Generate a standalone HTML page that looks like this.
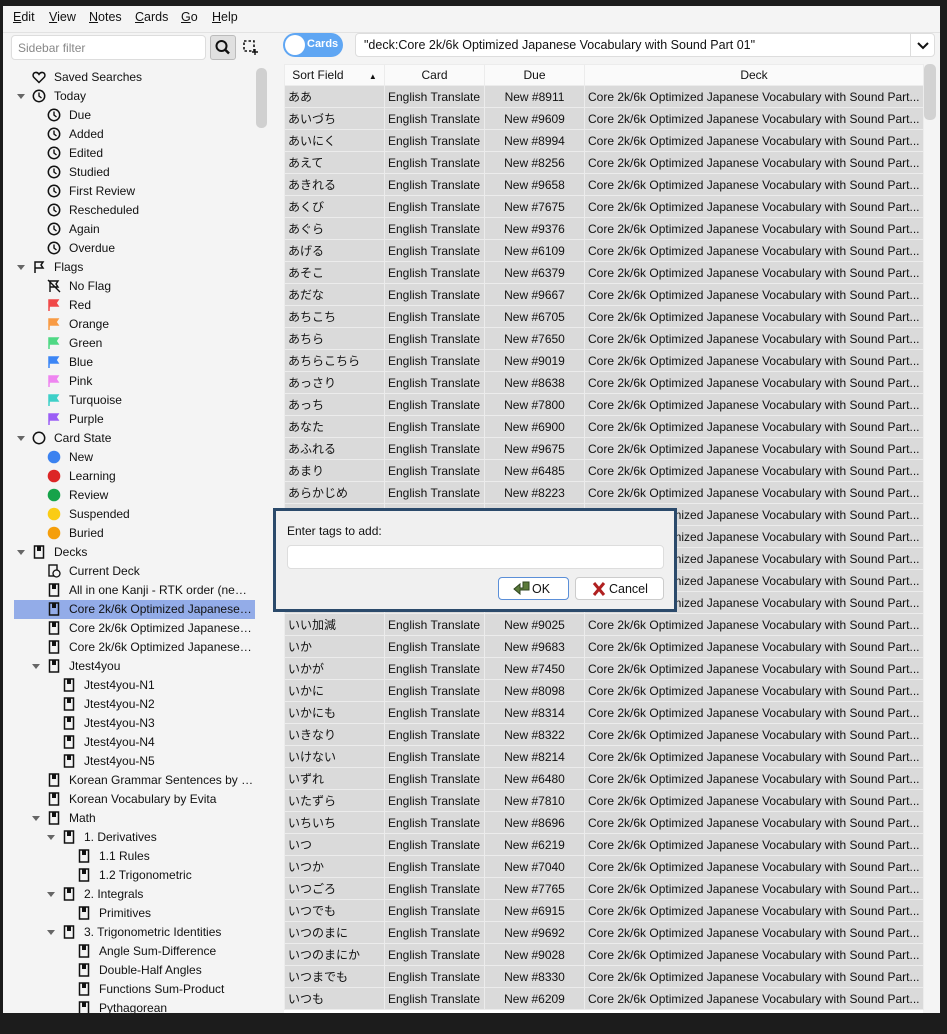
<!DOCTYPE html>
<html><head><meta charset="utf-8"><style>
*{box-sizing:border-box;margin:0;padding:0}
body{width:947px;height:1034px;background:#1c1c1c;position:relative;overflow:hidden;font-family:"Liberation Sans","Noto Sans CJK JP",sans-serif;font-size:12px;color:#111}
#win{position:absolute;left:3px;top:6px;width:937px;height:1007px;background:#f4f4f4;overflow:hidden}
.abs{position:absolute}
.menu span{position:absolute;top:4px;font-size:12.5px}
.menu u{text-decoration:underline}
.sb{position:absolute;left:0;top:62px;width:266px;height:945px;overflow:hidden}
.it{position:absolute;height:19px;line-height:19px;white-space:nowrap;font-size:12px}
.it svg{position:absolute;top:2px}
.arr{position:absolute;width:0;height:0;border-left:4px solid transparent;border-right:4px solid transparent;border-top:5px solid #666;top:7px}
table{border-collapse:collapse;position:absolute;left:281px;top:58px;table-layout:fixed}
td,th{height:22px;border:1px solid #ececec;white-space:nowrap;overflow:hidden;font-weight:normal;font-size:12px;padding:0 3px}
th{background:#fafafa;height:21px}
td{background:#dadada}
td.c,th{text-align:center}
</style></head><body>
<div id="win">
<div class="menu"><span style="left:10px"><u>E</u>dit</span><span style="left:46px"><u>V</u>iew</span><span style="left:86px"><u>N</u>otes</span><span style="left:132px"><u>C</u>ards</span><span style="left:178px"><u>G</u>o</span><span style="left:209px"><u>H</u>elp</span></div>
<div class="abs" style="left:0;top:26px;width:937px;height:1px;background:#e2e2e2"></div>
<div class="abs" style="left:8px;top:29px;width:195px;height:25px;background:#fff;border:1px solid #ddd;border-radius:4px;color:#888;padding:5px 0 0 6px;font-size:12px">Sidebar filter</div>
<div class="abs" style="left:207px;top:29px;width:26px;height:25px;background:#e0e0e0;border:1px solid #bbb;border-radius:3px"><svg width="24" height="23"><circle cx="10.5" cy="10" r="5" fill="none" stroke="#111" stroke-width="2"/><line x1="14" y1="13.5" x2="18" y2="17.5" stroke="#111" stroke-width="2.5"/></svg></div>
<svg class="abs" style="left:240px;top:34px" width="16" height="16"><rect x="1" y="1" width="10" height="10" fill="none" stroke="#111" stroke-width="1.6" stroke-dasharray="2.5 2"/><path d="M12 9v6M9 12h6" stroke="#111" stroke-width="1.4"/></svg>
<div class="abs" style="left:280px;top:27px;width:60px;height:24px;background:#5fa6f3;border-radius:12px"><div class="abs" style="left:2px;top:2px;width:20px;height:20px;background:#fff;border-radius:10px"></div><span class="abs" style="left:24px;top:5px;color:#fff;font-weight:bold;font-size:11px">Cards</span></div>
<div class="abs" style="left:352px;top:27px;width:580px;height:24px;background:#fff;border:1px solid #ddd;border-radius:4px;padding:4px 0 0 8px;font-size:12.5px">"deck:Core 2k/6k Optimized Japanese Vocabulary with Sound Part 01"
<div class="abs" style="right:0;top:0;width:24px;height:22px;border-left:1px solid #ddd"><svg width="24" height="22"><path d="M7 9l5 5 5-5" fill="none" stroke="#111" stroke-width="2"/></svg></div></div>

<div class="abs" style="left:281px;top:58px;width:639px;height:950px;background:#fff"></div>
<div class="abs" style="left:921px;top:58px;width:12px;height:56px;background:#d2d2d2;border-radius:5px"></div>

<div class="sb">
<div class="abs" style="left:253px;top:0;width:11px;height:60px;background:#d0d0d0;border-radius:5px"></div>
<div class="abs" style="left:11px;top:532px;width:241px;height:19px;background:#93ace8"></div>
<div class="it" style="top:0;left:29px"><svg width="14" height="14" style="left:0"><path d="M7 12.5L2 7.5C0.5 6 0.8 3 3.3 2.5 5 2.2 6.2 3 7 4.3 7.8 3 9 2.2 10.7 2.5 13.2 3 13.5 6 12 7.5Z" fill="none" stroke="#111" stroke-width="1.5"/></svg><span style="position:absolute;left:22px">Saved Searches</span></div>
<div class="it" style="top:19px;left:14px"><i class="arr" style="left:0"></i><svg width="14" height="14" style="left:15px"><circle cx="7" cy="7" r="5.7" fill="none" stroke="#111" stroke-width="1.5"/><path d="M7 3.5V7l2.5 2" fill="none" stroke="#111" stroke-width="1.4"/></svg><span style="position:absolute;left:37px">Today</span></div>
<div class="it" style="top:38px;left:44px"><svg width="14" height="14"><circle cx="7" cy="7" r="5.7" fill="none" stroke="#111" stroke-width="1.5"/><path d="M7 3.5V7l2.5 2" fill="none" stroke="#111" stroke-width="1.4"/></svg><span style="position:absolute;left:22px">Due</span></div>
<div class="it" style="top:57px;left:44px"><svg width="14" height="14"><circle cx="7" cy="7" r="5.7" fill="none" stroke="#111" stroke-width="1.5"/><path d="M7 3.5V7l2.5 2" fill="none" stroke="#111" stroke-width="1.4"/></svg><span style="position:absolute;left:22px">Added</span></div>
<div class="it" style="top:76px;left:44px"><svg width="14" height="14"><circle cx="7" cy="7" r="5.7" fill="none" stroke="#111" stroke-width="1.5"/><path d="M7 3.5V7l2.5 2" fill="none" stroke="#111" stroke-width="1.4"/></svg><span style="position:absolute;left:22px">Edited</span></div>
<div class="it" style="top:95px;left:44px"><svg width="14" height="14"><circle cx="7" cy="7" r="5.7" fill="none" stroke="#111" stroke-width="1.5"/><path d="M7 3.5V7l2.5 2" fill="none" stroke="#111" stroke-width="1.4"/></svg><span style="position:absolute;left:22px">Studied</span></div>
<div class="it" style="top:114px;left:44px"><svg width="14" height="14"><circle cx="7" cy="7" r="5.7" fill="none" stroke="#111" stroke-width="1.5"/><path d="M7 3.5V7l2.5 2" fill="none" stroke="#111" stroke-width="1.4"/></svg><span style="position:absolute;left:22px">First Review</span></div>
<div class="it" style="top:133px;left:44px"><svg width="14" height="14"><circle cx="7" cy="7" r="5.7" fill="none" stroke="#111" stroke-width="1.5"/><path d="M7 3.5V7l2.5 2" fill="none" stroke="#111" stroke-width="1.4"/></svg><span style="position:absolute;left:22px">Rescheduled</span></div>
<div class="it" style="top:152px;left:44px"><svg width="14" height="14"><circle cx="7" cy="7" r="5.7" fill="none" stroke="#111" stroke-width="1.5"/><path d="M7 3.5V7l2.5 2" fill="none" stroke="#111" stroke-width="1.4"/></svg><span style="position:absolute;left:22px">Again</span></div>
<div class="it" style="top:171px;left:44px"><svg width="14" height="14"><circle cx="7" cy="7" r="5.7" fill="none" stroke="#111" stroke-width="1.5"/><path d="M7 3.5V7l2.5 2" fill="none" stroke="#111" stroke-width="1.4"/></svg><span style="position:absolute;left:22px">Overdue</span></div>
<div class="it" style="top:190px;left:14px"><i class="arr" style="left:0"></i><svg width="14" height="14" style="left:15px"><path d="M3 13V2h8l-2 3 2 3H3" fill="none" stroke="#111" stroke-width="1.5"/></svg><span style="position:absolute;left:37px">Flags</span></div>
<div class="it" style="top:209px;left:44px"><svg width="14" height="14"><path d="M3 13V2h8l-2 3 2 3H3M1 1l12 12" fill="none" stroke="#111" stroke-width="1.4"/></svg><span style="position:absolute;left:22px">No Flag</span></div>
<div class="it" style="top:228px;left:44px"><svg width="14" height="14"><path d="M2 13V2h9l-2 3 2 3H3" fill="#f04848" stroke="#f04848" stroke-width="1.5"/></svg><span style="position:absolute;left:22px">Red</span></div>
<div class="it" style="top:247px;left:44px"><svg width="14" height="14"><path d="M2 13V2h9l-2 3 2 3H3" fill="#f89b45" stroke="#f89b45" stroke-width="1.5"/></svg><span style="position:absolute;left:22px">Orange</span></div>
<div class="it" style="top:266px;left:44px"><svg width="14" height="14"><path d="M2 13V2h9l-2 3 2 3H3" fill="#4fd884" stroke="#4fd884" stroke-width="1.5"/></svg><span style="position:absolute;left:22px">Green</span></div>
<div class="it" style="top:285px;left:44px"><svg width="14" height="14"><path d="M2 13V2h9l-2 3 2 3H3" fill="#3d86f5" stroke="#3d86f5" stroke-width="1.5"/></svg><span style="position:absolute;left:22px">Blue</span></div>
<div class="it" style="top:304px;left:44px"><svg width="14" height="14"><path d="M2 13V2h9l-2 3 2 3H3" fill="#ee85f0" stroke="#ee85f0" stroke-width="1.5"/></svg><span style="position:absolute;left:22px">Pink</span></div>
<div class="it" style="top:323px;left:44px"><svg width="14" height="14"><path d="M2 13V2h9l-2 3 2 3H3" fill="#3ed0c8" stroke="#3ed0c8" stroke-width="1.5"/></svg><span style="position:absolute;left:22px">Turquoise</span></div>
<div class="it" style="top:342px;left:44px"><svg width="14" height="14"><path d="M2 13V2h9l-2 3 2 3H3" fill="#9b5ef5" stroke="#9b5ef5" stroke-width="1.5"/></svg><span style="position:absolute;left:22px">Purple</span></div>
<div class="it" style="top:361px;left:14px"><i class="arr" style="left:0"></i><svg width="14" height="14" style="left:15px"><circle cx="7" cy="7" r="5.7" fill="none" stroke="#111" stroke-width="1.5"/></svg><span style="position:absolute;left:37px">Card State</span></div>
<div class="it" style="top:380px;left:44px"><svg width="14" height="14"><circle cx="7" cy="7" r="6.3" fill="#3b82f0"/></svg><span style="position:absolute;left:22px">New</span></div>
<div class="it" style="top:399px;left:44px"><svg width="14" height="14"><circle cx="7" cy="7" r="6.3" fill="#dc2626"/></svg><span style="position:absolute;left:22px">Learning</span></div>
<div class="it" style="top:418px;left:44px"><svg width="14" height="14"><circle cx="7" cy="7" r="6.3" fill="#16a34a"/></svg><span style="position:absolute;left:22px">Review</span></div>
<div class="it" style="top:437px;left:44px"><svg width="14" height="14"><circle cx="7" cy="7" r="6.3" fill="#facc15"/></svg><span style="position:absolute;left:22px">Suspended</span></div>
<div class="it" style="top:456px;left:44px"><svg width="14" height="14"><circle cx="7" cy="7" r="6.3" fill="#f59e0b"/></svg><span style="position:absolute;left:22px">Buried</span></div>
<div class="it" style="top:475px;left:14px"><i class="arr" style="left:0"></i><svg width="14" height="14" style="left:15px"><rect x="2.5" y="1" width="9" height="12" fill="none" stroke="#111" stroke-width="1.5"/><rect x="5" y="1" width="4" height="5" fill="#111"/></svg><span style="position:absolute;left:37px">Decks</span></div>
<div class="it" style="top:494px;left:44px"><svg width="14" height="14"><rect x="2" y="1" width="8" height="11" fill="none" stroke="#111" stroke-width="1.4"/><circle cx="9.5" cy="9.5" r="3.5" fill="#f4f4f4" stroke="#111" stroke-width="1.3"/></svg><span style="position:absolute;left:22px">Current Deck</span></div>
<div class="it" style="top:513px;left:44px"><svg width="14" height="14"><rect x="2.5" y="1" width="9" height="12" fill="none" stroke="#111" stroke-width="1.5"/><rect x="5" y="1" width="4" height="5" fill="#111"/></svg><span style="position:absolute;left:22px">All in one Kanji - RTK order (ne…</span></div>
<div class="it" style="top:532px;left:44px"><svg width="14" height="14"><rect x="2.5" y="1" width="9" height="12" fill="none" stroke="#111" stroke-width="1.5"/><rect x="5" y="1" width="4" height="5" fill="#111"/></svg><span style="position:absolute;left:22px">Core 2k/6k Optimized Japanese…</span></div>
<div class="it" style="top:551px;left:44px"><svg width="14" height="14"><rect x="2.5" y="1" width="9" height="12" fill="none" stroke="#111" stroke-width="1.5"/><rect x="5" y="1" width="4" height="5" fill="#111"/></svg><span style="position:absolute;left:22px">Core 2k/6k Optimized Japanese…</span></div>
<div class="it" style="top:570px;left:44px"><svg width="14" height="14"><rect x="2.5" y="1" width="9" height="12" fill="none" stroke="#111" stroke-width="1.5"/><rect x="5" y="1" width="4" height="5" fill="#111"/></svg><span style="position:absolute;left:22px">Core 2k/6k Optimized Japanese…</span></div>
<div class="it" style="top:589px;left:29px"><i class="arr" style="left:0"></i><svg width="14" height="14" style="left:15px"><rect x="2.5" y="1" width="9" height="12" fill="none" stroke="#111" stroke-width="1.5"/><rect x="5" y="1" width="4" height="5" fill="#111"/></svg><span style="position:absolute;left:37px">Jtest4you</span></div>
<div class="it" style="top:608px;left:59px"><svg width="14" height="14"><rect x="2.5" y="1" width="9" height="12" fill="none" stroke="#111" stroke-width="1.5"/><rect x="5" y="1" width="4" height="5" fill="#111"/></svg><span style="position:absolute;left:22px">Jtest4you-N1</span></div>
<div class="it" style="top:627px;left:59px"><svg width="14" height="14"><rect x="2.5" y="1" width="9" height="12" fill="none" stroke="#111" stroke-width="1.5"/><rect x="5" y="1" width="4" height="5" fill="#111"/></svg><span style="position:absolute;left:22px">Jtest4you-N2</span></div>
<div class="it" style="top:646px;left:59px"><svg width="14" height="14"><rect x="2.5" y="1" width="9" height="12" fill="none" stroke="#111" stroke-width="1.5"/><rect x="5" y="1" width="4" height="5" fill="#111"/></svg><span style="position:absolute;left:22px">Jtest4you-N3</span></div>
<div class="it" style="top:665px;left:59px"><svg width="14" height="14"><rect x="2.5" y="1" width="9" height="12" fill="none" stroke="#111" stroke-width="1.5"/><rect x="5" y="1" width="4" height="5" fill="#111"/></svg><span style="position:absolute;left:22px">Jtest4you-N4</span></div>
<div class="it" style="top:684px;left:59px"><svg width="14" height="14"><rect x="2.5" y="1" width="9" height="12" fill="none" stroke="#111" stroke-width="1.5"/><rect x="5" y="1" width="4" height="5" fill="#111"/></svg><span style="position:absolute;left:22px">Jtest4you-N5</span></div>
<div class="it" style="top:703px;left:44px"><svg width="14" height="14"><rect x="2.5" y="1" width="9" height="12" fill="none" stroke="#111" stroke-width="1.5"/><rect x="5" y="1" width="4" height="5" fill="#111"/></svg><span style="position:absolute;left:22px">Korean Grammar Sentences by …</span></div>
<div class="it" style="top:722px;left:44px"><svg width="14" height="14"><rect x="2.5" y="1" width="9" height="12" fill="none" stroke="#111" stroke-width="1.5"/><rect x="5" y="1" width="4" height="5" fill="#111"/></svg><span style="position:absolute;left:22px">Korean Vocabulary by Evita</span></div>
<div class="it" style="top:741px;left:29px"><i class="arr" style="left:0"></i><svg width="14" height="14" style="left:15px"><rect x="2.5" y="1" width="9" height="12" fill="none" stroke="#111" stroke-width="1.5"/><rect x="5" y="1" width="4" height="5" fill="#111"/></svg><span style="position:absolute;left:37px">Math</span></div>
<div class="it" style="top:760px;left:44px"><i class="arr" style="left:0"></i><svg width="14" height="14" style="left:15px"><rect x="2.5" y="1" width="9" height="12" fill="none" stroke="#111" stroke-width="1.5"/><rect x="5" y="1" width="4" height="5" fill="#111"/></svg><span style="position:absolute;left:37px">1. Derivatives</span></div>
<div class="it" style="top:779px;left:74px"><svg width="14" height="14"><rect x="2.5" y="1" width="9" height="12" fill="none" stroke="#111" stroke-width="1.5"/><rect x="5" y="1" width="4" height="5" fill="#111"/></svg><span style="position:absolute;left:22px">1.1 Rules</span></div>
<div class="it" style="top:798px;left:74px"><svg width="14" height="14"><rect x="2.5" y="1" width="9" height="12" fill="none" stroke="#111" stroke-width="1.5"/><rect x="5" y="1" width="4" height="5" fill="#111"/></svg><span style="position:absolute;left:22px">1.2 Trigonometric</span></div>
<div class="it" style="top:817px;left:44px"><i class="arr" style="left:0"></i><svg width="14" height="14" style="left:15px"><rect x="2.5" y="1" width="9" height="12" fill="none" stroke="#111" stroke-width="1.5"/><rect x="5" y="1" width="4" height="5" fill="#111"/></svg><span style="position:absolute;left:37px">2. Integrals</span></div>
<div class="it" style="top:836px;left:74px"><svg width="14" height="14"><rect x="2.5" y="1" width="9" height="12" fill="none" stroke="#111" stroke-width="1.5"/><rect x="5" y="1" width="4" height="5" fill="#111"/></svg><span style="position:absolute;left:22px">Primitives</span></div>
<div class="it" style="top:855px;left:44px"><i class="arr" style="left:0"></i><svg width="14" height="14" style="left:15px"><rect x="2.5" y="1" width="9" height="12" fill="none" stroke="#111" stroke-width="1.5"/><rect x="5" y="1" width="4" height="5" fill="#111"/></svg><span style="position:absolute;left:37px">3. Trigonometric Identities</span></div>
<div class="it" style="top:874px;left:74px"><svg width="14" height="14"><rect x="2.5" y="1" width="9" height="12" fill="none" stroke="#111" stroke-width="1.5"/><rect x="5" y="1" width="4" height="5" fill="#111"/></svg><span style="position:absolute;left:22px">Angle Sum-Difference</span></div>
<div class="it" style="top:893px;left:74px"><svg width="14" height="14"><rect x="2.5" y="1" width="9" height="12" fill="none" stroke="#111" stroke-width="1.5"/><rect x="5" y="1" width="4" height="5" fill="#111"/></svg><span style="position:absolute;left:22px">Double-Half Angles</span></div>
<div class="it" style="top:912px;left:74px"><svg width="14" height="14"><rect x="2.5" y="1" width="9" height="12" fill="none" stroke="#111" stroke-width="1.5"/><rect x="5" y="1" width="4" height="5" fill="#111"/></svg><span style="position:absolute;left:22px">Functions Sum-Product</span></div>
<div class="it" style="top:931px;left:74px"><svg width="14" height="14"><rect x="2.5" y="1" width="9" height="12" fill="none" stroke="#111" stroke-width="1.5"/><rect x="5" y="1" width="4" height="5" fill="#111"/></svg><span style="position:absolute;left:22px">Pythagorean</span></div>
<div class="it" style="top:950px;left:44px"><svg width="14" height="14"><rect x="2.5" y="1" width="9" height="12" fill="none" stroke="#111" stroke-width="1.5"/><rect x="5" y="1" width="4" height="5" fill="#111"/></svg></div>
</div>

<table>
<colgroup><col style="width:100px"><col style="width:100px"><col style="width:100px"><col style="width:339px"></colgroup>
<tr><th>Sort Field <span style="font-size:8px;margin-left:22px">▲</span></th><th>Card</th><th>Due</th><th>Deck</th></tr>
<tr><td>ああ</td><td>English Translate</td><td class="c">New #8911</td><td>Core 2k/6k Optimized Japanese Vocabulary with Sound Part...</td></tr>
<tr><td>あいづち</td><td>English Translate</td><td class="c">New #9609</td><td>Core 2k/6k Optimized Japanese Vocabulary with Sound Part...</td></tr>
<tr><td>あいにく</td><td>English Translate</td><td class="c">New #8994</td><td>Core 2k/6k Optimized Japanese Vocabulary with Sound Part...</td></tr>
<tr><td>あえて</td><td>English Translate</td><td class="c">New #8256</td><td>Core 2k/6k Optimized Japanese Vocabulary with Sound Part...</td></tr>
<tr><td>あきれる</td><td>English Translate</td><td class="c">New #9658</td><td>Core 2k/6k Optimized Japanese Vocabulary with Sound Part...</td></tr>
<tr><td>あくび</td><td>English Translate</td><td class="c">New #7675</td><td>Core 2k/6k Optimized Japanese Vocabulary with Sound Part...</td></tr>
<tr><td>あぐら</td><td>English Translate</td><td class="c">New #9376</td><td>Core 2k/6k Optimized Japanese Vocabulary with Sound Part...</td></tr>
<tr><td>あげる</td><td>English Translate</td><td class="c">New #6109</td><td>Core 2k/6k Optimized Japanese Vocabulary with Sound Part...</td></tr>
<tr><td>あそこ</td><td>English Translate</td><td class="c">New #6379</td><td>Core 2k/6k Optimized Japanese Vocabulary with Sound Part...</td></tr>
<tr><td>あだな</td><td>English Translate</td><td class="c">New #9667</td><td>Core 2k/6k Optimized Japanese Vocabulary with Sound Part...</td></tr>
<tr><td>あちこち</td><td>English Translate</td><td class="c">New #6705</td><td>Core 2k/6k Optimized Japanese Vocabulary with Sound Part...</td></tr>
<tr><td>あちら</td><td>English Translate</td><td class="c">New #7650</td><td>Core 2k/6k Optimized Japanese Vocabulary with Sound Part...</td></tr>
<tr><td>あちらこちら</td><td>English Translate</td><td class="c">New #9019</td><td>Core 2k/6k Optimized Japanese Vocabulary with Sound Part...</td></tr>
<tr><td>あっさり</td><td>English Translate</td><td class="c">New #8638</td><td>Core 2k/6k Optimized Japanese Vocabulary with Sound Part...</td></tr>
<tr><td>あっち</td><td>English Translate</td><td class="c">New #7800</td><td>Core 2k/6k Optimized Japanese Vocabulary with Sound Part...</td></tr>
<tr><td>あなた</td><td>English Translate</td><td class="c">New #6900</td><td>Core 2k/6k Optimized Japanese Vocabulary with Sound Part...</td></tr>
<tr><td>あふれる</td><td>English Translate</td><td class="c">New #9675</td><td>Core 2k/6k Optimized Japanese Vocabulary with Sound Part...</td></tr>
<tr><td>あまり</td><td>English Translate</td><td class="c">New #6485</td><td>Core 2k/6k Optimized Japanese Vocabulary with Sound Part...</td></tr>
<tr><td>あらかじめ</td><td>English Translate</td><td class="c">New #8223</td><td>Core 2k/6k Optimized Japanese Vocabulary with Sound Part...</td></tr>
<tr><td>あらゆる</td><td>English Translate</td><td class="c">New #7001</td><td>Core 2k/6k Optimized Japanese Vocabulary with Sound Part...</td></tr>
<tr><td>ある</td><td>English Translate</td><td class="c">New #7002</td><td>Core 2k/6k Optimized Japanese Vocabulary with Sound Part...</td></tr>
<tr><td>あれ</td><td>English Translate</td><td class="c">New #7003</td><td>Core 2k/6k Optimized Japanese Vocabulary with Sound Part...</td></tr>
<tr><td>いい</td><td>English Translate</td><td class="c">New #7004</td><td>Core 2k/6k Optimized Japanese Vocabulary with Sound Part...</td></tr>
<tr><td>いいえ</td><td>English Translate</td><td class="c">New #7005</td><td>Core 2k/6k Optimized Japanese Vocabulary with Sound Part...</td></tr>
<tr><td>いい加減</td><td>English Translate</td><td class="c">New #9025</td><td>Core 2k/6k Optimized Japanese Vocabulary with Sound Part...</td></tr>
<tr><td>いか</td><td>English Translate</td><td class="c">New #9683</td><td>Core 2k/6k Optimized Japanese Vocabulary with Sound Part...</td></tr>
<tr><td>いかが</td><td>English Translate</td><td class="c">New #7450</td><td>Core 2k/6k Optimized Japanese Vocabulary with Sound Part...</td></tr>
<tr><td>いかに</td><td>English Translate</td><td class="c">New #8098</td><td>Core 2k/6k Optimized Japanese Vocabulary with Sound Part...</td></tr>
<tr><td>いかにも</td><td>English Translate</td><td class="c">New #8314</td><td>Core 2k/6k Optimized Japanese Vocabulary with Sound Part...</td></tr>
<tr><td>いきなり</td><td>English Translate</td><td class="c">New #8322</td><td>Core 2k/6k Optimized Japanese Vocabulary with Sound Part...</td></tr>
<tr><td>いけない</td><td>English Translate</td><td class="c">New #8214</td><td>Core 2k/6k Optimized Japanese Vocabulary with Sound Part...</td></tr>
<tr><td>いずれ</td><td>English Translate</td><td class="c">New #6480</td><td>Core 2k/6k Optimized Japanese Vocabulary with Sound Part...</td></tr>
<tr><td>いたずら</td><td>English Translate</td><td class="c">New #7810</td><td>Core 2k/6k Optimized Japanese Vocabulary with Sound Part...</td></tr>
<tr><td>いちいち</td><td>English Translate</td><td class="c">New #8696</td><td>Core 2k/6k Optimized Japanese Vocabulary with Sound Part...</td></tr>
<tr><td>いつ</td><td>English Translate</td><td class="c">New #6219</td><td>Core 2k/6k Optimized Japanese Vocabulary with Sound Part...</td></tr>
<tr><td>いつか</td><td>English Translate</td><td class="c">New #7040</td><td>Core 2k/6k Optimized Japanese Vocabulary with Sound Part...</td></tr>
<tr><td>いつごろ</td><td>English Translate</td><td class="c">New #7765</td><td>Core 2k/6k Optimized Japanese Vocabulary with Sound Part...</td></tr>
<tr><td>いつでも</td><td>English Translate</td><td class="c">New #6915</td><td>Core 2k/6k Optimized Japanese Vocabulary with Sound Part...</td></tr>
<tr><td>いつのまに</td><td>English Translate</td><td class="c">New #9692</td><td>Core 2k/6k Optimized Japanese Vocabulary with Sound Part...</td></tr>
<tr><td>いつのまにか</td><td>English Translate</td><td class="c">New #9028</td><td>Core 2k/6k Optimized Japanese Vocabulary with Sound Part...</td></tr>
<tr><td>いつまでも</td><td>English Translate</td><td class="c">New #8330</td><td>Core 2k/6k Optimized Japanese Vocabulary with Sound Part...</td></tr>
<tr><td>いつも</td><td>English Translate</td><td class="c">New #6209</td><td>Core 2k/6k Optimized Japanese Vocabulary with Sound Part...</td></tr>
</table>

<div class="abs" style="left:270px;top:502px;width:404px;height:104px;background:#f0f0f0;border:3px solid #2b4a6b">
<div class="abs" style="left:11px;top:13px;font-size:12px">Enter tags to add:</div>
<div class="abs" style="left:11px;top:34px;width:377px;height:24px;background:#fff;border:1px solid #ddd;border-radius:4px"></div>
<div class="abs" style="left:222px;top:66px;width:71px;height:23px;background:#fff;border:1px solid #5b8fd8;border-radius:4px;font-size:12.5px;padding:4px 0 0 16px"><svg class="abs" style="left:14px;top:3px" width="18" height="16"><path d="M10 1h6v8H7v4L1 8l6-5v4h3z" fill="#5b7a3a" stroke="#2f4520" stroke-width="1"/></svg><span style="position:absolute;left:33px;top:4px">OK</span></div>
<div class="abs" style="left:299px;top:66px;width:89px;height:23px;background:#fff;border:1px solid #ccc;border-radius:4px;font-size:12.5px"><svg class="abs" style="left:16px;top:3px" width="14" height="16"><path d="M2 2l10 12M12 2L2 14" stroke="#b02020" stroke-width="3"/></svg><span style="position:absolute;left:33px;top:4px">Cancel</span></div>
</div>
</div>
</body></html>
